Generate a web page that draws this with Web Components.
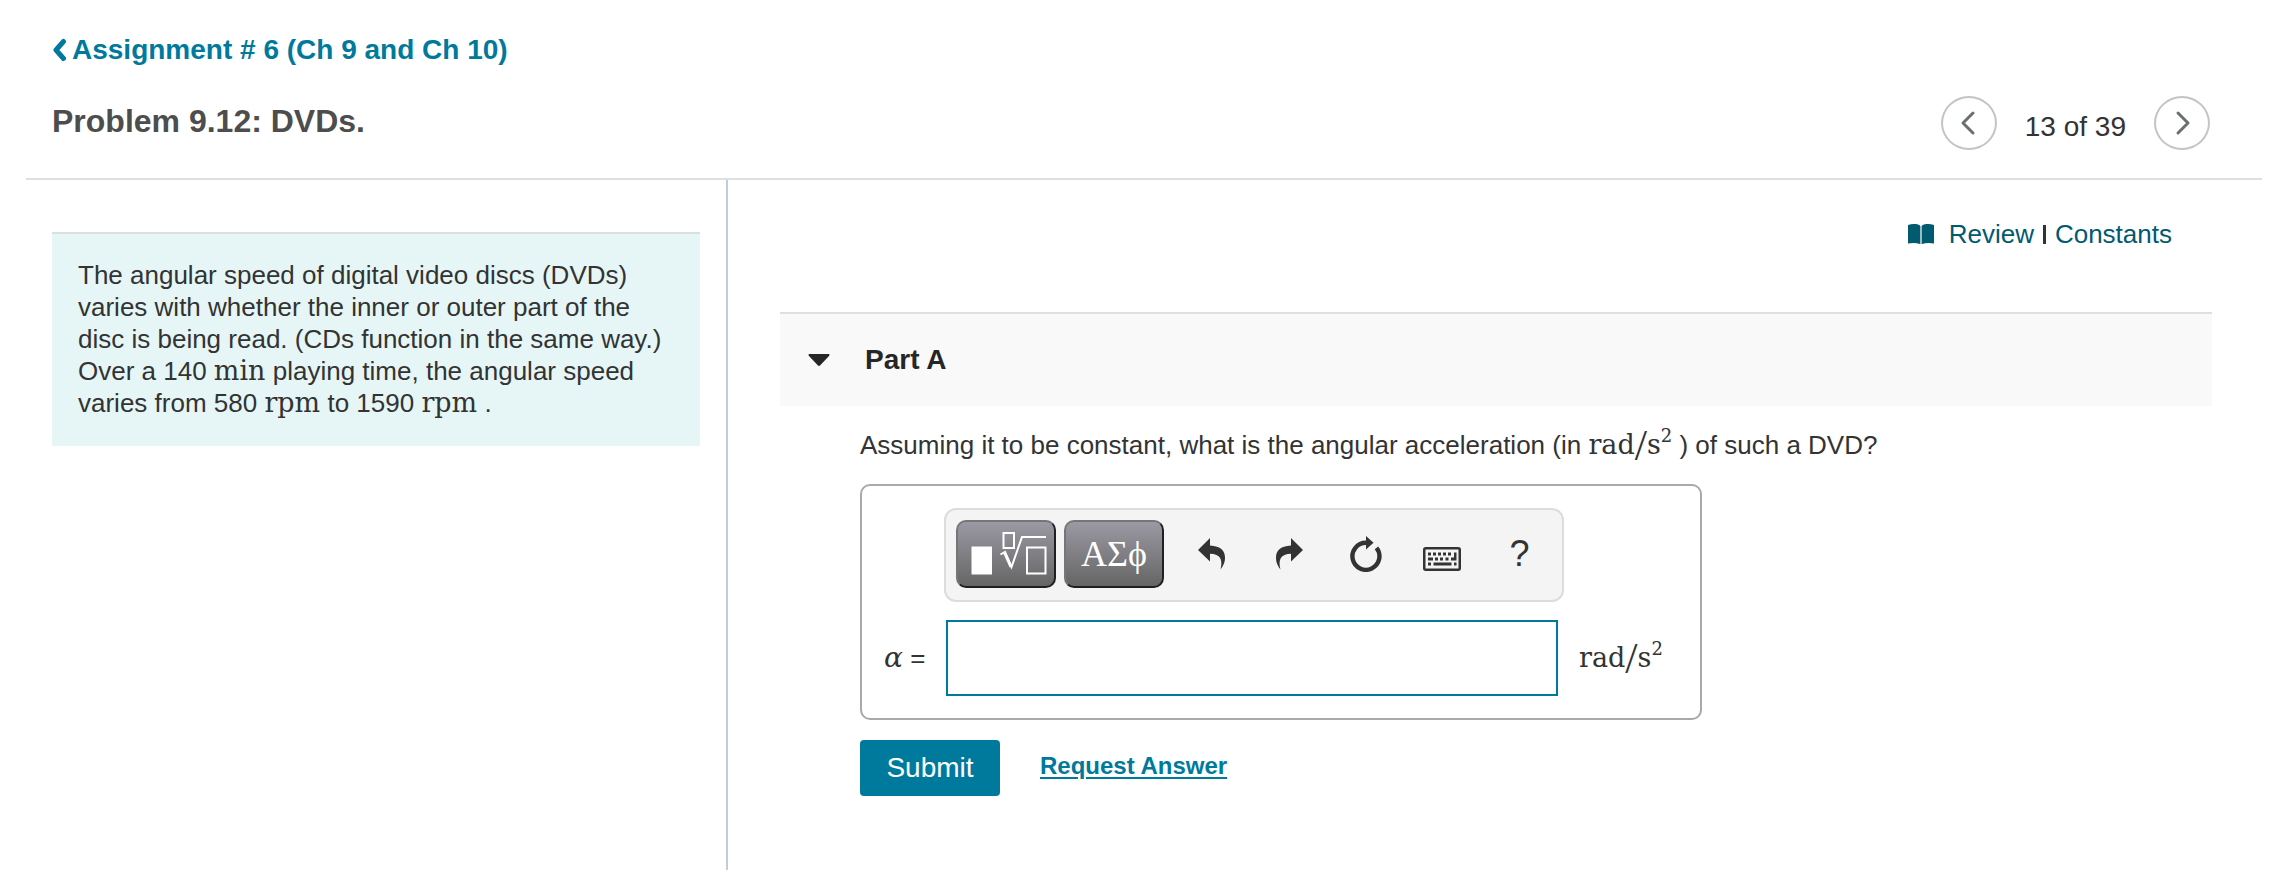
<!DOCTYPE html>
<html lang="en">
<head>
  <meta charset="utf-8">
  <title>Problem 9.12: DVDs.</title>
  <style>
    body {
      margin: 0;
      background: #fff;
      color: #333;
      font-family: "Liberation Sans", Arial, sans-serif;
      font-size: 26px;
      line-height: 32px;
      --teal: #007a9c;
      --rule: #dfdfdf;
      --math: "DejaVu Serif", serif;
      --math-light: "Liberation Serif", "Times New Roman", serif;
    }
  </style>
</head>
<body>
  <problem-page>
    <problem-header slot="header" back="Assignment # 6 (Ch 9 and Ch 10)" position="13 of 39">Problem 9.12: DVDs.</problem-header>

    <problem-intro slot="intro">The angular speed of digital video discs (DVDs) varies with whether the inner or outer part of the disc is being read. (CDs function in the same way.) Over a 140 <math-unit>min</math-unit> playing time, the angular speed varies from 580 <math-unit>rpm</math-unit> to 1590 <math-unit>rpm</math-unit> .</problem-intro>

    <resource-links></resource-links>
    <problem-part label="Part A">
      <span slot="question">Assuming it to be constant, what is the angular acceleration (in <accel-unit></accel-unit> ) of such a DVD?</span>
      <answer-box></answer-box>
      <answer-actions></answer-actions>
    </problem-part>
  </problem-page>

  <script>
    class ProblemPage extends HTMLElement {
      constructor() {
        super();
        this.attachShadow({ mode: 'open' });
      }

      connectedCallback() {
        this.shadowRoot.innerHTML = `
          <style>
            :host {
              display: flex;
              flex-direction: column;
              box-sizing: border-box;
              min-height: 100vh;
              padding: 0 12px 0 26px;
            }

            .columns {
              display: flex;
              flex: 1;
            }

            aside {
              flex: 0 1 702px;
              box-sizing: border-box;
              padding: 52px 26px;
              border-right: 2px solid #bfccda;
            }

            main {
              flex: 1;
              min-width: 0;
              padding: 38px 50px 38px 52px;
            }
          </style>

          <slot name="header"></slot>
          <div class="columns">
            <aside><slot name="intro"></slot></aside>
            <main><slot></slot></main>
          </div>
        `;
      }
    }

    class ProblemHeader extends HTMLElement {
      constructor() {
        super();
        this.attachShadow({ mode: 'open' });
      }

      connectedCallback() {
        this.shadowRoot.innerHTML = `
          <style>
            :host {
              display: flex;
              flex-direction: column;
              gap: 30px;
              padding: 34px 52px 28px 26px;
              border-bottom: 2px solid var(--rule);
            }

            .back {
              display: flex;
              align-items: center;
              align-self: flex-start;
              gap: 5px;
              color: var(--teal);
              font-size: 28px;
              font-weight: bold;
              text-decoration: none;
            }

            .row {
              display: flex;
              justify-content: space-between;
              align-items: center;
            }

            h1 {
              margin: 0 0 4px;
              color: #4d4d4d;
              font-size: 32px;
              line-height: 36px;
            }

            nav {
              display: flex;
              align-items: center;
              gap: 28px;
              font-size: 28px;
            }

            nav span {
              padding-top: 7px;
            }

            button {
              display: flex;
              align-items: center;
              justify-content: center;
              box-sizing: border-box;
              width: 56px;
              height: 54px;
              padding: 0;
              border: 2px solid #c4c4c4;
              border-radius: 50%;
              background: #fff;
              cursor: pointer;
            }

            button svg {
              stroke: #6a7070;
            }

            svg {
              display: block;
              fill: none;
              stroke-linecap: round;
              stroke-linejoin: round;
            }
          </style>

          <a class="back" href="#">
            <svg width="15" height="24" viewBox="0 0 15 24" stroke="#007a9c" stroke-width="5"><path d="M11.500 3.500 4 12l7.500 8.500"/></svg>
            ${this.getAttribute('back')}
          </a>
          <div class="row">
            <h1><slot></slot></h1>
            <nav>
              <button type="button" aria-label="Previous">
                <svg width="20" height="26" viewBox="0 0 20 26" stroke-width="3"><path d="M14 3 4 13l10 10"/></svg>
              </button>
              <span>${this.getAttribute('position')}</span>
              <button type="button" aria-label="Next">
                <svg width="18" height="26" viewBox="0 0 18 26" stroke-width="3"><path d="M5 3l10 10L5 23"/></svg>
              </button>
            </nav>
          </div>
        `;
      }
    }

    class ProblemIntro extends HTMLElement {
      constructor() {
        super();
        this.attachShadow({ mode: 'open' });
        this.shadowRoot.innerHTML = `
          <style>
            :host {
              display: block;
              padding: 25px 26px 27px;
              border-top: 2px solid #d9e0df;
              background: #e6f6f7;
            }
          </style>
          <slot></slot>
        `;
      }
    }

    // Upright serif unit inside running text
    class MathUnit extends HTMLElement {
      constructor() {
        super();
        this.attachShadow({ mode: 'open' });
        this.shadowRoot.innerHTML = `<style>
            :host {
              font-family: var(--math);
              font-size: 27px;
              line-height: 0;
            }
          </style><slot></slot>`;
      }
    }

    class AccelUnit extends HTMLElement {
      constructor() {
        super();
        this.attachShadow({ mode: 'open' });
        this.shadowRoot.innerHTML = `
          <style>
            :host {
              font-family: var(--math);
              font-size: 27px;
              line-height: 0;
              white-space: nowrap;
            }

            .slash {
              font-family: var(--math-light);
              font-size: 44px;
              vertical-align: -6px;
            }

            sup {
              font-size: 18px;
              line-height: 0;
              vertical-align: 12px;
            }
          </style>
          rad<span class="slash">/</span>s<sup>2</sup>`;
      }
    }

    class ResourceLinks extends HTMLElement {
      constructor() {
        super();
        this.attachShadow({ mode: 'open' });
        this.shadowRoot.innerHTML = `
          <style>
            :host {
              display: flex;
              justify-content: flex-end;
              align-items: center;
              gap: 9px;
              margin: 0 40px 62px 0;
            }

            svg {
              margin-right: 6px;
            }

            a {
              color: #005a70;
              text-decoration: none;
            }

            i {
              width: 3px;
              height: 19px;
              background: #333;
            }
          </style>

          <svg width="26" height="20" viewBox="0 0 26 20" fill="#005a70">
            <path d="M0 1C4-.4 9-.4 12 1.500V20C8 18.600 4 18.600 0 19.600ZM26 1C22-.4 17-.4 14 1.500V20C18 18.600 22 18.600 26 19.600Z"/>
            <path d="M12 2h2v18h-2z" opacity=".4"/>
          </svg>
          <a href="#">Review</a>
          <i></i>
          <a href="#">Constants</a>
        `;
      }
    }

    class ProblemPart extends HTMLElement {
      constructor() {
        super();
        this.attachShadow({ mode: 'open' });
      }

      connectedCallback() {
        this.shadowRoot.innerHTML = `
          <style>
            :host {
              display: block;
            }

            header {
              display: flex;
              align-items: center;
              gap: 35px;
              padding: 30px 28px;
              border-top: 2px solid var(--rule);
              background: #f9f9f9;
              color: #262626;
            }

            .toggle {
              display: flex;
              padding: 0;
              border: 0;
              background: none;
              cursor: pointer;
            }

            h2 {
              margin: 0;
              font-size: 28px;
              line-height: 32px;
            }

            .content {
              display: flex;
              flex-direction: column;
              padding: 23px 0 0 80px;
            }

            p {
              margin: 0 0 23px;
            }
          </style>

          <header>
            <button class="toggle" type="button" aria-label="Collapse">
              <svg width="22" height="12" viewBox="0 0 22 12" fill="#262626"><path d="M1 0h20q1 1 0 2L12 11.500q-1 .8-2 0L1 2Q0 1 1 0Z"/></svg>
            </button>
            <h2>${this.getAttribute('label')}</h2>
          </header>
          <div class="content">
            <p><slot name="question"></slot></p>
            <slot></slot>
          </div>
        `;
      }
    }

    class EquationToolbar extends HTMLElement {
      constructor() {
        super();
        this.attachShadow({ mode: 'open' });
        this.shadowRoot.innerHTML = `
          <style>
            :host {
              display: flex;
              align-items: center;
              box-sizing: border-box;
              height: 94px;
              padding: 0 4px 2px 10px;
              border: 2px solid #dcdcdc;
              border-radius: 12px;
              background: #f4f4f4;
            }

            button {
              display: flex;
              align-items: center;
              justify-content: center;
              box-sizing: border-box;
              padding: 0;
              cursor: pointer;
            }

            .palette {
              width: 100px;
              height: 68px;
              margin-right: 8px;
              border: 2px solid;
              border-color: #767676 #202020 #202020 #767676;
              border-radius: 10px;
              background: linear-gradient(#9b99a3, #656565);
              color: #fff;
              font-family: var(--math-light);
              font-size: 36px;
              line-height: 36px;
            }

            .tools {
              display: flex;
              flex: 1;
            }

            .tool {
              flex: 1;
              height: 68px;
              border: 0;
              background: none;
              color: #333;
              font-family: inherit;
              font-size: 36px;
            }

            .tool svg {
              fill: #333;
            }
          </style>

          <button class="palette" type="button" aria-label="Templates">
            <svg width="96" height="64" viewBox="2 2 96 64" fill="none" stroke="#fff" stroke-width="2">
              <path d="M15.500 26.500h20.500v28H15.500z" fill="#fff" stroke="none"/>
              <path d="M47.500 13h10.500v15H47.500zM71 27.500h18.500v26H71z"/>
              <path d="M44.500 34.500 49 32l6.500 15L66 17h24"/>
              <path d="M48.500 32.500 55 47" stroke-width="3"/>
            </svg>
          </button>
          <button class="palette" type="button">ΑΣϕ</button>
          <div class="tools">
            <button class="tool" type="button" aria-label="Undo">
              <svg width="28" height="32" viewBox="-1 0 28 32"><path d="M0 12 12 0V7.500C23 8 27 13 27 19.500 27 25 25 28 22.500 31.500 25 22 22.500 16 12 15.800V23.500Z"/></svg>
            </button>
            <button class="tool" type="button" aria-label="Redo">
              <svg width="31" height="32" viewBox="-4 0 31 32"><path d="M27 12 15 0V7.500C4 8 0 13 0 19.500 0 25 2 28 4.500 31.500 2 22 4.500 16 15 15.800V23.500Z"/></svg>
            </button>
            <button class="tool" type="button" aria-label="Reset">
              <svg width="34" height="36" viewBox="-2 0 34 36"><path d="M16 0l7.500 6.750L16 13.500Z"/><path d="M16 6.800A13.500 13.500 0 1 0 26.500 11.900" fill="none" stroke="#333" stroke-width="4.400"/></svg>
            </button>
            <button class="tool" type="button" aria-label="Keyboard shortcuts">
              <svg width="38" height="34" viewBox="0 -10 38 34">
                <rect x="1.250" y="1.250" width="35.500" height="21.500" rx="1.500" fill="none" stroke="#333" stroke-width="2.500"/>
                <path d="M5 5.500h3v3H5zM10 5.500h3v3h-3zM15 5.500h3v3h-3zM20 5.500h3v3h-3zM25 5.500h3v3h-3zM31 5.500h2.500v8H28v-3h3zM5 10.500h5v3H5zM12 10.500h3v3h-3zM17 10.500h3v3h-3zM22.500 10.500h3v3h-3zM5 15.500h3v3H5zM10.500 15.500h18v3h-18zM31 15.500h2.500v3H31z"/>
              </svg>
            </button>
            <button class="tool" type="button">?</button>
          </div>
        `;
      }
    }

    class AnswerBox extends HTMLElement {
      constructor() {
        super();
        this.attachShadow({ mode: 'open' });
        this.shadowRoot.innerHTML = `
          <style>
            :host {
              display: grid;
              grid-template-columns: 60px minmax(0, 620px) auto;
              align-items: center;
              justify-content: start;
              row-gap: 18px;
              box-sizing: border-box;
              width: 100%;
              max-width: 842px;
              padding: 22px;
              border: 2px solid #a9a9a9;
              border-radius: 10px;
            }

            equation-toolbar {
              grid-column: 2;
            }

            label {
              grid-column: 1;
              white-space: nowrap;
            }

            em {
              font-family: var(--math);
              font-size: 28px;
              line-height: 0;
            }

            input {
              box-sizing: border-box;
              height: 76px;
              margin: 0 6px 0 2px;
              padding: 0 12px;
              border: 2px solid var(--teal);
              border-radius: 0;
              background: #fff;
              color: inherit;
              font: inherit;
              outline: none;
            }

            accel-unit {
              margin-left: 15px;
              line-height: 32px;
            }
          </style>

          <equation-toolbar></equation-toolbar>
          <label for="answer"><em>α</em> =</label>
          <input type="text" id="answer">
          <accel-unit></accel-unit>
        `;
      }
    }

    class AnswerActions extends HTMLElement {
      constructor() {
        super();
        this.attachShadow({ mode: 'open' });
        this.shadowRoot.innerHTML = `
          <style>
            :host {
              display: flex;
              align-items: center;
              gap: 40px;
              margin-top: 20px;
            }

            button {
              width: 140px;
              height: 56px;
              padding: 0;
              border: 0;
              border-radius: 4px;
              background: var(--teal);
              color: #fff;
              font-family: inherit;
              font-size: 28px;
              cursor: pointer;
            }

            a {
              padding-bottom: 4px;
              color: var(--teal);
              font-size: 24px;
              font-weight: bold;
              text-underline-offset: 3px;
            }
          </style>

          <button type="submit">Submit</button>
          <a href="#">Request Answer</a>
        `;
      }
    }

    customElements.define('problem-page', ProblemPage);
    customElements.define('problem-header', ProblemHeader);
    customElements.define('problem-intro', ProblemIntro);
    customElements.define('math-unit', MathUnit);
    customElements.define('accel-unit', AccelUnit);
    customElements.define('resource-links', ResourceLinks);
    customElements.define('problem-part', ProblemPart);
    customElements.define('equation-toolbar', EquationToolbar);
    customElements.define('answer-box', AnswerBox);
    customElements.define('answer-actions', AnswerActions);
  </script>
</body>
</html>
